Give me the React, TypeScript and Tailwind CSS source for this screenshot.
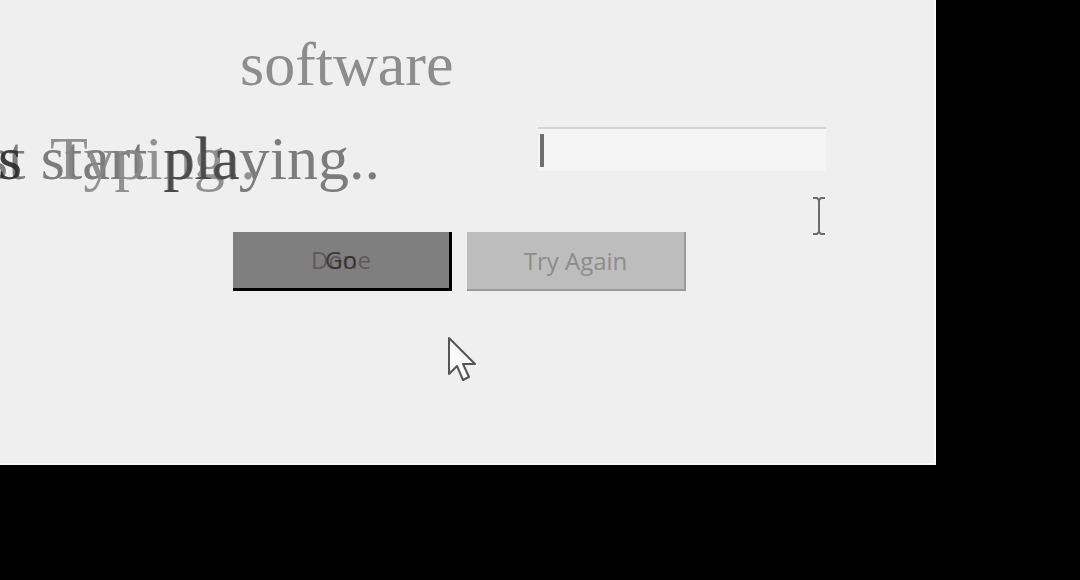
import { type ReactNode } from "react";

const serif = "font-['Liberation_Serif','Times_New_Roman',serif]";
const ui = "font-['Open_Sans','Noto_Sans',sans-serif]";

function FormButton(props: { dark?: boolean; children: ReactNode }) {
  return (
    <div
      className={
        props.dark
          ? "relative flex h-[59px] w-[219px] items-center justify-center border-r-[3px] border-b-[3px] border-black bg-[#7f7f7f] text-[24px] text-[#3a3a3a]"
          : "relative flex h-[59px] w-[219px] items-center justify-center border-r-[2px] border-b-[2px] border-[#9a9a9a] bg-[#bdbdbd] text-[24px] text-[#8c8c8c]"
      }
    >
      {props.children}
    </div>
  );
}

export default function App() {
  return (
    <div className="flex h-[580px] w-[1080px] items-start overflow-hidden bg-black">
      <div
        className={`relative h-[465px] w-[936px] overflow-hidden border-r-[2px] border-b-[2px] border-[#fafafa] bg-[#efefef] ${serif}`}
      >
        {/* title */}
        <div className="mt-[28px] pl-[240px] text-[62px] leading-[72px] text-[#8d8d8d]">
          software
        </div>

        {/* status + input row */}
        <div className="mt-[20px] flex items-start">
          <div className="relative h-[80px] w-[538px] text-[62px] leading-[76px]">
            <span className="absolute left-[-16px] top-0 whitespace-nowrap text-[#7c7c7c]">
              st start playing..
            </span>
            <span className="absolute left-[50px] top-0 whitespace-nowrap text-[#868686] opacity-90">
              Typing..
            </span>
            <span className="absolute left-[-2px] top-0 whitespace-nowrap text-[#2a2a2a] opacity-90">
              s
            </span>
            <span className="absolute left-[164px] top-0 whitespace-nowrap text-[#3a3a3a] opacity-75">
              pla
            </span>
          </div>
          <div className="mt-[7px] flex h-[44px] w-[288px] items-center border-t-[2px] border-[#d4d4d4] bg-[#f5f5f5] pl-[2px]">
            <div className="h-[33px] w-[4px] bg-[#6f6f6f]" />
          </div>
        </div>

        {/* buttons */}
        <div className={`mt-[32px] flex gap-[15px] pl-[233px] ${ui}`}>
          <FormButton dark>
            <span className="absolute text-[#5a4f55] opacity-80">Done</span>
            <span className="absolute text-[#1e1e1e] opacity-70">Go</span>
          </FormButton>
          <FormButton>Try Again</FormButton>
        </div>

        {/* text cursor */}
        <svg
          className="absolute left-[810px] top-[196px]"
          width="18"
          height="40"
          viewBox="0 0 18 40"
        >
          <path
            d="M3 2h4l2 2l2-2h4M9 4v32M3 38h4l2-2l2 2h4"
            fill="none"
            stroke="#6b6b6b"
            strokeWidth="2"
          />
        </svg>

        {/* arrow cursor */}
        <svg
          className="absolute left-[446px] top-[336px]"
          width="34"
          height="48"
          viewBox="0 0 34 48"
        >
          <path
            d="M3 2v36l8-8l6 14l6-3l-6-13h12z"
            fill="#fbfbfb"
            stroke="#555"
            strokeWidth="2"
            strokeLinejoin="round"
          />
        </svg>
      </div>
    </div>
  );
}
